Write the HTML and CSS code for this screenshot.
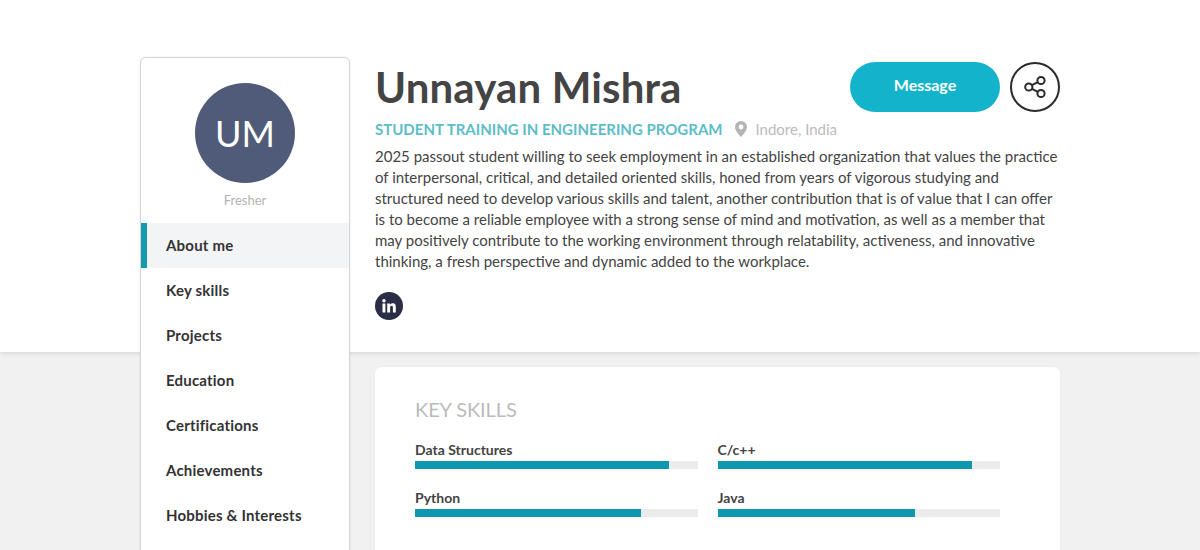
FILE: index.html
```html
<!DOCTYPE html>
<html lang="en">
<head>
<meta charset="utf-8">
<title>Unnayan Mishra</title>
<link rel="stylesheet" href="styles.css">
</head>
<body>
<div class="band"></div>
<div class="layout">
  <aside class="sidebar">
    <div class="profile">
      <div class="avatar">UM</div>
      <div class="status">Fresher</div>
    </div>
    <nav class="nav">
      <a class="nav-item active">About me</a>
      <a class="nav-item">Key skills</a>
      <a class="nav-item">Projects</a>
      <a class="nav-item">Education</a>
      <a class="nav-item">Certifications</a>
      <a class="nav-item">Achievements</a>
      <a class="nav-item">Hobbies &amp; Interests</a>
    </nav>
  </aside>
  <main class="main">
    <section class="hero">
      <div class="hero-top">
        <h1 class="name">Unnayan Mishra</h1>
        <div class="actions">
          <button class="message">Message</button>
          <button class="share" aria-label="Share">
            <svg width="24" height="24" viewBox="0 0 24 24" fill="none" stroke="#2b2b2b" stroke-width="2">
              <circle cx="18" cy="5.5" r="3.600"/>
              <circle cx="5.800" cy="12" r="3.600"/>
              <circle cx="18" cy="18.500" r="3.600"/>
              <path d="M9 10.200l5.800-3M9 13.800l5.800 3"/>
            </svg>
          </button>
        </div>
      </div>
      <div class="meta">
        <span class="role">STUDENT TRAINING IN ENGINEERING PROGRAM</span>
        <svg class="pin" width="12" height="16" viewBox="0 0 12 16"><path fill="#b5b5b5" fill-rule="evenodd" d="M6 0a6 6 0 0 1 6 6c0 3.600-4 8-6 10C4 14 0 9.600 0 6a6 6 0 0 1 6-6zm0 3.600a2.400 2.400 0 1 0 0 4.800 2.400 2.400 0 0 0 0-4.800z"/></svg>
        <span class="location">Indore, India</span>
      </div>
      <p class="bio">2025 passout student willing to seek employment in an established organization that values the practice of interpersonal, critical, and detailed oriented skills, honed from years of vigorous studying and structured need to develop various skills and talent, another contribution that is of value that I can offer is to become a reliable employee with a strong sense of mind and motivation, as well as a member that may positively contribute to the working environment through relatability, activeness, and innovative thinking, a fresh perspective and dynamic added to the workplace.</p>
      <a class="linkedin" aria-label="LinkedIn">
        <svg width="14" height="14" viewBox="0 0 14 14" fill="#fff"><rect x="0.500" y="4.500" width="2.900" height="9"/><circle cx="1.950" cy="1.800" r="1.700"/><path d="M5.200 4.500H8v1.300c.5-.9 1.500-1.500 2.800-1.500 2.400 0 3 1.600 3 3.700v5.500H10.900V8.700c0-1.100-.2-2-1.300-2-1.200 0-1.500.9-1.500 2v4.800H5.200z"/></svg>
      </a>
    </section>
    <section class="card">
      <h2 class="card-title">KEY SKILLS</h2>
      <div class="skills">
        <div class="skill"><div class="skill-name">Data Structures</div><div class="track"><div class="fill" style="width:90%"></div></div></div>
        <div class="skill"><div class="skill-name">C/c++</div><div class="track"><div class="fill" style="width:90%"></div></div></div>
        <div class="skill"><div class="skill-name">Python</div><div class="track"><div class="fill" style="width:80%"></div></div></div>
        <div class="skill"><div class="skill-name">Java</div><div class="track"><div class="fill" style="width:70%"></div></div></div>
      </div>
    </section>
  </main>
</div>
</body>
</html>
```
FILE: styles.css
```css
* { box-sizing: border-box; }
html, body { height: 550px; overflow: hidden; }
body {
  margin: 0;
  background: #f1f1f1;
  font-family: Lato, "Liberation Sans", sans-serif;
  color: #444;
}
.band {
  position: absolute;
  top: 0; left: 0; right: 0;
  height: 352px;
  background: #fff;
  box-shadow: 0 1px 5px rgba(0,0,0,.13);
}
.layout {
  position: relative;
  width: 920px;
  margin: 0 auto;
  padding-top: 57px;
  display: flex;
  gap: 25px;
  align-items: flex-start;
}
.sidebar {
  flex: 0 0 210px;
  height: 520px;
  background: #fff;
  border: 1px solid #d6d6d6;
  border-radius: 6px;
  box-shadow: 0 0 3px rgba(0,0,0,.08);
}
.profile {
  display: flex;
  flex-direction: column;
  align-items: center;
  padding-top: 25px;
}
.avatar {
  width: 100px;
  height: 100px;
  border-radius: 50%;
  background: #4f5b78;
  color: #fff;
  font-size: 36px;
  font-weight: 400;
  display: flex;
  align-items: center;
  justify-content: center;
}
.status {
  margin-top: 9px;
  font-size: 13px;
  line-height: 16px;
  color: #b4b4b4;
  margin-bottom: 15px;
}
.nav-item {
  display: block;
  height: 45px;
  line-height: 45px;
  padding-left: 25px;
  font-size: 15px;
  font-weight: 700;
  letter-spacing: .2px;
  color: #333;
}
.nav-item.active {
  background: #f3f4f6;
  border-left: 6px solid #139aad;
  padding-left: 19px;
}
.main { flex: 1; min-width: 0; }
.hero { height: 295px; }
.hero-top {
  display: flex;
  justify-content: space-between;
  align-items: flex-start;
}
.name {
  margin: 0;
  font-size: 42px;
  line-height: 60px;
  font-weight: 700;
  letter-spacing: .15px;
  color: #444;
}
.actions {
  display: flex;
  gap: 10px;
  padding-top: 5px;
}
.message {
  width: 150px;
  height: 50px;
  border: 0;
  border-radius: 25px;
  background: #12b3cb;
  color: #fff;
  font: 700 16px/46px Lato, sans-serif;
  padding: 0 0 4px;
}
.share {
  width: 50px;
  height: 50px;
  border: 2px solid #2b2b2b;
  border-radius: 50%;
  background: #fff;
  padding: 0;
  display: flex;
  align-items: center;
  justify-content: center;
}
.meta {
  display: flex;
  align-items: center;
  height: 24px;
}
.role {
  font-size: 15px;
  font-weight: 700;
  color: #5cbdc7;
}
.pin { margin-left: 13px; }
.location {
  margin-left: 8px;
  font-size: 15px;
  color: #bbb;
}
.bio {
  margin: 5px 0 0;
  font-size: 15px;
  line-height: 21px;
  color: #444;
}
.linkedin {
  display: flex;
  width: 28px;
  height: 28px;
  margin-top: 20px;
  border-radius: 50%;
  background: #2a2e45;
  align-items: center;
  justify-content: center;
}
.card {
  margin-top: 15px;
  background: #fff;
  border-radius: 6px;
  padding: 29px 60px 0 40px;
  height: 300px;
  box-shadow: 0 0 3px rgba(0,0,0,.04);
}
.card-title {
  margin: 0;
  font-size: 20px;
  line-height: 26px;
  font-weight: 400;
  letter-spacing: -.1px;
  color: #bbb;
}
.skills {
  margin-top: 19px;
  display: grid;
  grid-template-columns: 1fr 1fr;
  column-gap: 20px;
  row-gap: 20px;
}
.skill-name {
  font-size: 14px;
  line-height: 17px;
  font-weight: 700;
  color: #444;
  margin-bottom: 3px;
}
.track { height: 8px; background: #ebebeb; }
.fill { height: 100%; background: #0e98ad; }
```
